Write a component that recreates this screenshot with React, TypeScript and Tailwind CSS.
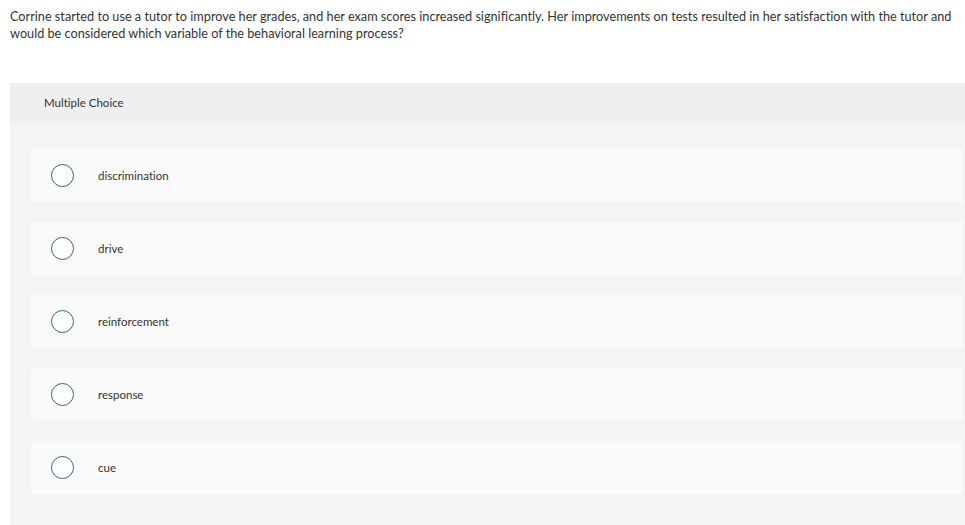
import React from "react";

const options = ["discrimination", "drive", "reinforcement", "response", "cue"];

export default function App() {
  return (
    <div className="w-[965px] h-[525px] bg-white overflow-hidden text-[#333333] [font-variant-ligatures:none]" style={{ fontFamily: 'Lato, "Liberation Sans", Arial, sans-serif' }}>
      <div className="pl-[10px] pr-[3px] pt-[8px] text-[12.7px] leading-[17px] h-[83px]">
        Corrine started to use a tutor to improve her grades, and her exam scores increased significantly. Her improvements on tests resulted in her satisfaction with the tutor and would be considered which variable of the behavioral learning process?
      </div>
      <div className="ml-[10px] bg-[#f4f4f4] h-[442px]">
        <div className="h-[40px] bg-[#efefef] flex items-center pl-[34px] text-[11.5px]">Multiple Choice</div>
        <div className="flex flex-col gap-[20px] pt-[26px] pl-[21px] pr-[2px]">
          {options.map((o) => (
            <div key={o} className="h-[53px] bg-[#fafafa] rounded-[3px] flex items-center">
              <div className="ml-[20px] w-[23px] h-[23px] rounded-full border-[1.5px] border-[#2f6394] bg-white shrink-0" />
              <span className="ml-[24px] text-[11.5px]">{o}</span>
            </div>
          ))}
        </div>
      </div>
    </div>
  );
}
